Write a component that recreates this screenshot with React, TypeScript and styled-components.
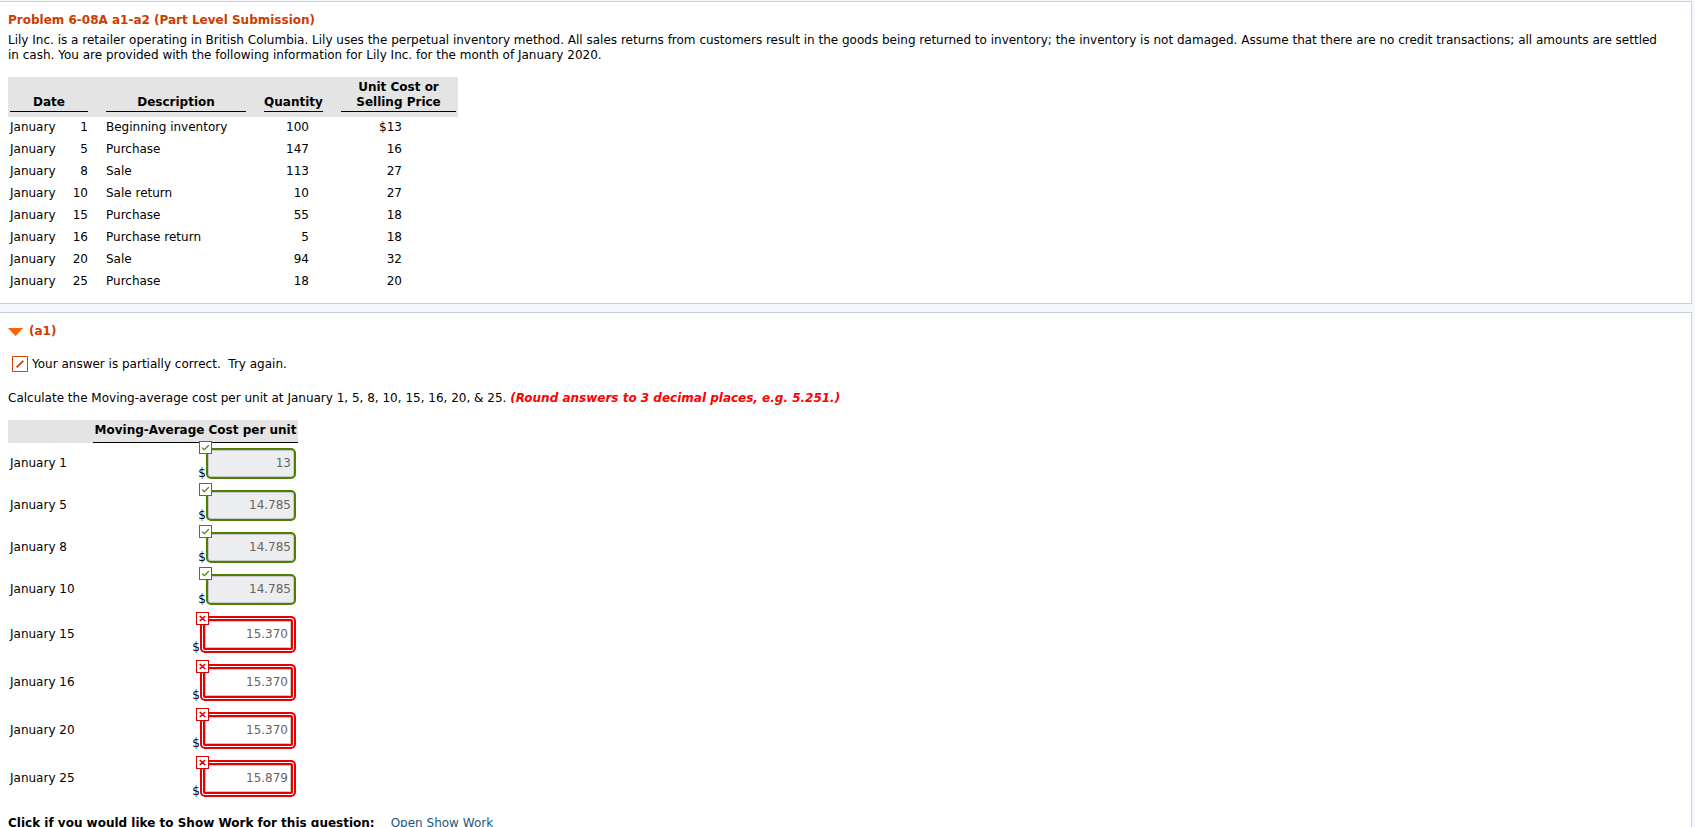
import React from "react";
import styled, { createGlobalStyle, css } from "styled-components";

const GlobalStyle = createGlobalStyle`
  * { box-sizing: border-box; }
  html { scrollbar-width: none; }
  body {
    margin: 0;
    background: #f4f8fc;
    color: #000;
    font: 12px/15px Verdana, "DejaVu Sans", sans-serif;
  }
`;

const Page = styled.main`
  display: flex;
  flex-direction: column;
  gap: 8px;
  height: 100vh;
  overflow-y: auto;
  scrollbar-width: none;
  padding: 1px 3px 0 0;
`;

const Panel = styled.section`
  flex: none;
  background: #fff;
  border: solid #c8d0de;
  border-width: 1px 1px 1px 0;
  padding: 11px 24px 10px 8px;
`;

const Title = styled.h1`
  margin: 0 0 5px;
  font-size: 12px;
  line-height: 15px;
  color: #cc3d00;
`;

const Paragraph = styled.p`
  margin: 0;
`;

const InventoryTable = styled.table`
  margin-top: 14px;
  border-collapse: collapse;

  td {
    height: 22px;
    padding: 0 2px 2px;
    white-space: nowrap;
  }
`;

const HeadCell = styled.th`
  height: 40px;
  padding: 2px 2px 5px;
  background: #e4e4e4;
  vertical-align: bottom;
`;

const Rule = styled.div<{ $width: number }>`
  width: ${(p) => p.$width}px;
  padding-bottom: 1px;
  border-bottom: 1px solid #000;
`;

const Spacer = styled.th`
  width: 14px;
  padding: 0;
  background: #e4e4e4;
`;

const NumberCell = styled.td<{ $inset?: number }>`
  text-align: right;

  && {
    padding-right: ${(p) => p.$inset ?? 2}px;
  }
`;

const PartHeading = styled.h2`
  display: flex;
  align-items: center;
  gap: 6px;
  margin: 0;
  font-size: 12px;
  line-height: 15px;
  color: #cc3d00;
`;

const Toggle = styled.button`
  display: flex;
  padding: 0;
  border: 0;
  background: none;
  cursor: pointer;
`;

const Status = styled.p`
  display: flex;
  align-items: center;
  gap: 4px;
  margin: 17px 0 19px 4px;
  white-space: pre;
`;

const Hint = styled.em`
  font-weight: bold;
  color: #f00;
`;

const AnswerTable = styled.table`
  width: 290px;
  margin-top: 14px;
  border-spacing: 0;
  table-layout: fixed;
`;

const AnswerHead = styled.th<{ $ruled?: boolean }>`
  width: ${(p) => (p.$ruled ? 205 : 85)}px;
  height: 23px;
  padding: 0 0 2px;
  border-bottom: 1px solid ${(p) => (p.$ruled ? "#000" : "#e4e4e4")};
  background: #e4e4e4;
  white-space: nowrap;
`;

const AnswerRow = styled.tr<{ $correct: boolean }>`
  height: ${(p) => (p.$correct ? 42 : 48)}px;

  td {
    padding: 0 2px 1px;
  }

  th {
    padding: 0 2px 2px;
    text-align: left;
    font-weight: normal;
  }
`;

const Amount = styled.div`
  display: flex;
  align-items: flex-end;
  justify-content: flex-end;
`;

const Currency = styled.span`
  line-height: 11px;
`;

const Field = styled.div`
  position: relative;
  display: flex;
`;

const Badge = styled.span<{ $correct: boolean }>`
  position: absolute;
  left: ${(p) => (p.$correct ? -7 : -4)}px;
  top: ${(p) => (p.$correct ? -7 : -4)}px;
  width: 13px;
  height: 13px;
  display: flex;
  align-items: center;
  justify-content: center;
  border: 1px solid;
  background: #fff;
  color: ${(p) => (p.$correct ? "#4c8000" : "#e00000")};
`;

const AnswerInput = styled.input<{ $correct: boolean }>`
  padding: 0 3px 1px;
  border-radius: 5px;
  font: inherit;
  text-align: right;
  color: #666;
  box-shadow: inset 0 0 0 1px #c8c8cc;
  outline: none;
  ${(p) =>
    p.$correct
      ? css`
          width: 90px;
          height: 31px;
          border: 2px solid #4c8000;
          background: #ebedef;
        `
      : css`
          width: 96px;
          height: 37px;
          border: 5px double #e60000;
          background: #fff;
        `}
`;

const ShowWork = styled.p`
  display: flex;
  gap: 16px;
  margin: 13px 0 0;

  a {
    color: #1a5680;
    text-decoration: none;
  }
`;

const transactions = [
  ["1", "Beginning inventory", "100", "$13"],
  ["5", "Purchase", "147", "16"],
  ["8", "Sale", "113", "27"],
  ["10", "Sale return", "10", "27"],
  ["15", "Purchase", "55", "18"],
  ["16", "Purchase return", "5", "18"],
  ["20", "Sale", "94", "32"],
  ["25", "Purchase", "18", "20"],
];

const answers = [
  { day: 1, value: "13", correct: true },
  { day: 5, value: "14.785", correct: true },
  { day: 8, value: "14.785", correct: true },
  { day: 10, value: "14.785", correct: true },
  { day: 15, value: "15.370", correct: false },
  { day: 16, value: "15.370", correct: false },
  { day: 20, value: "15.370", correct: false },
  { day: 25, value: "15.879", correct: false },
];

const Mark = ({ correct }: { correct: boolean }) => (
  <svg width="11" height="11" viewBox="0 0 11 11" fill="none" stroke="currentColor" aria-hidden="true">
    {correct ? (
      <path d="M2.2 5.8 4.3 7.6 8.8 3.3" strokeWidth="1.2" />
    ) : (
      <path d="M2.8 3 8.2 8M8.2 3 2.8 8" strokeWidth="1.7" />
    )}
  </svg>
);

export default function App() {
  return (
    <>
      <GlobalStyle />
      <Page>
        <Panel>
          <Title>Problem 6-08A a1-a2 (Part Level Submission)</Title>
          <Paragraph>
            Lily Inc. is a retailer operating in British Columbia. Lily uses the perpetual inventory method. All sales
            returns from customers result in the goods being returned to inventory; the inventory is not damaged. Assume
            that there are no credit transactions; all amounts are settled in cash. You are provided with the following
            information for Lily Inc. for the month of January 2020.
          </Paragraph>
          <InventoryTable>
            <thead>
              <tr>
                <HeadCell colSpan={2}><Rule $width={78}>Date</Rule></HeadCell>
                <Spacer />
                <HeadCell><Rule $width={140}>Description</Rule></HeadCell>
                <Spacer />
                <HeadCell><Rule $width={59}>Quantity</Rule></HeadCell>
                <Spacer />
                <HeadCell>
                  <Rule $width={115}>
                    Unit Cost or
                    <br />
                    Selling Price
                  </Rule>
                </HeadCell>
              </tr>
            </thead>
            <tbody>
              {transactions.map(([day, description, quantity, price]) => (
                <tr key={day}>
                  <td>January</td>
                  <NumberCell>{day}</NumberCell>
                  <td />
                  <td>{description}</td>
                  <td />
                  <NumberCell $inset={16}>{quantity}</NumberCell>
                  <td />
                  <NumberCell $inset={56}>{price}</NumberCell>
                </tr>
              ))}
            </tbody>
          </InventoryTable>
        </Panel>

        <Panel>
          <PartHeading>
            <Toggle type="button" aria-label="Collapse part a1">
              <svg width="15" height="8" viewBox="0 0 15 8" aria-hidden="true">
                <path d="M0 0h15L7.5 8z" fill="#ff6000" />
              </svg>
            </Toggle>
            (a1)
          </PartHeading>
          <Status>
            <svg width="16" height="16" viewBox="0 0 16 16" fill="none" stroke="#d64000" aria-hidden="true">
              <path d="M.5.5h15v15H.5z" />
              <path d="M4.6 11.4 11.4 4.8" strokeWidth="1.8" />
            </svg>
            {"Your answer is partially correct.  Try again."}
          </Status>
          <Paragraph>
            Calculate the Moving-average cost per unit at January 1, 5, 8, 10, 15, 16, 20, &amp; 25.{" "}
            <Hint>(Round answers to 3 decimal places, e.g. 5.251.)</Hint>
          </Paragraph>
          <AnswerTable>
            <thead>
              <tr>
                <AnswerHead />
                <AnswerHead $ruled>Moving-Average Cost per unit</AnswerHead>
              </tr>
            </thead>
            <tbody>
              {answers.map(({ day, value, correct }) => (
                <AnswerRow key={day} $correct={correct}>
                  <th scope="row">
                    <label htmlFor={`cost-${day}`}>January {day}</label>
                  </th>
                  <td>
                    <Amount>
                      <Currency>$</Currency>
                      <Field>
                        <AnswerInput id={`cost-${day}`} $correct={correct} defaultValue={value} readOnly={correct} />
                        <Badge $correct={correct}>
                          <Mark correct={correct} />
                        </Badge>
                      </Field>
                    </Amount>
                  </td>
                </AnswerRow>
              ))}
            </tbody>
          </AnswerTable>
          <ShowWork>
            <strong>Click if you would like to Show Work for this question:</strong>
            <a href="#show-work">Open Show Work</a>
          </ShowWork>
        </Panel>
      </Page>
    </>
  );
}
